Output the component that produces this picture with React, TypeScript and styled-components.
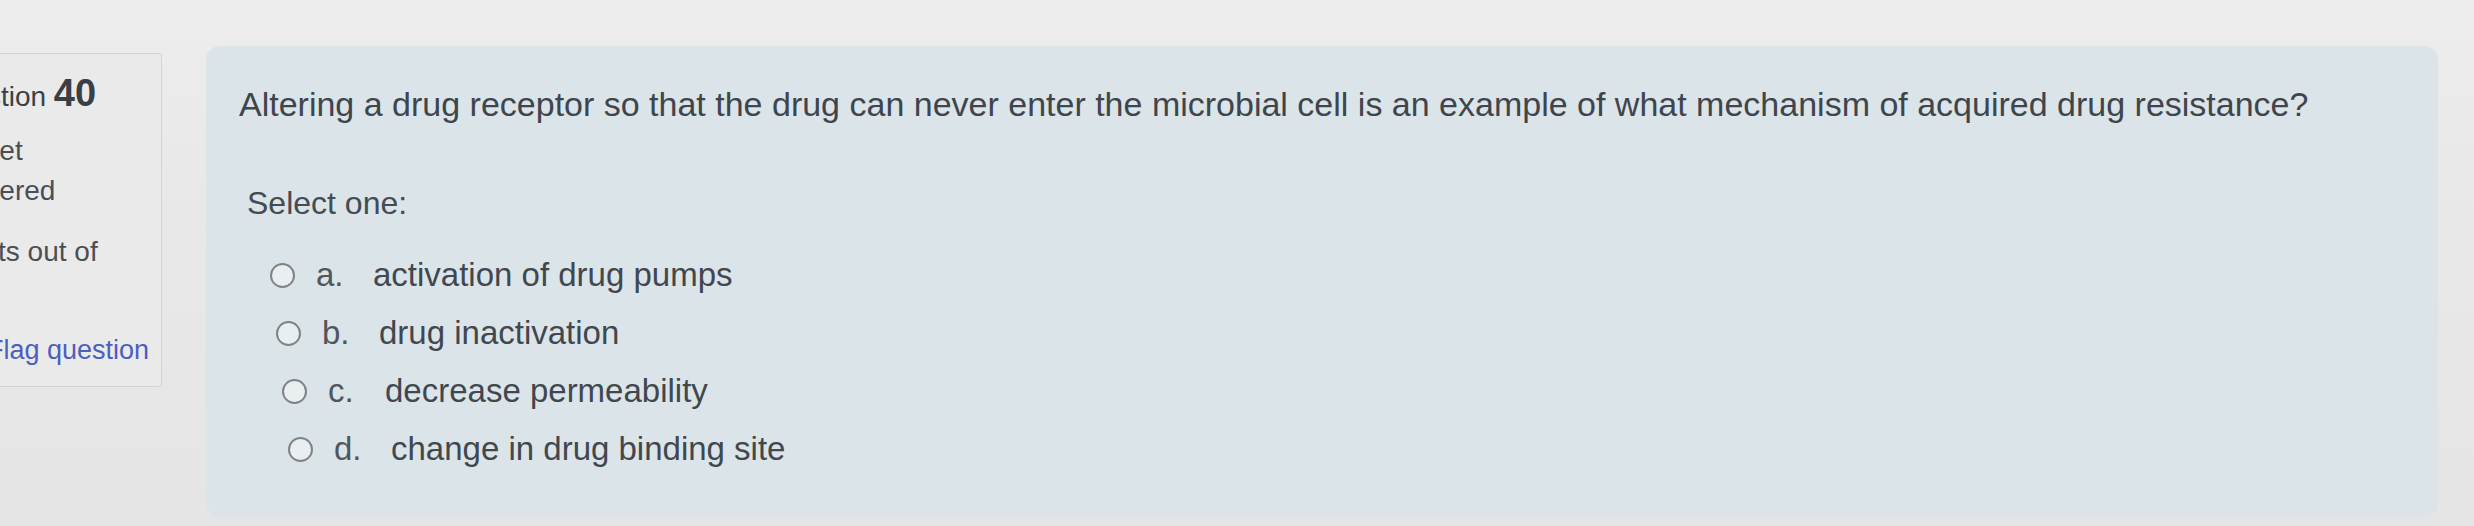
import React from 'react';
import styled, { createGlobalStyle } from 'styled-components';

const GlobalStyle = createGlobalStyle`
  html, body {
    margin: 0;
    padding: 0;
  }

  body {
    overflow: hidden;
    background: linear-gradient(180deg, #ededed 0%, #e9e8e8 40%, #e6e5e5 100%);
    font-family: 'Liberation Sans', Arial, sans-serif;
    color: #40464d;
  }
`;

type Option = {
  letter: string;
  text: string;
};

const OPTIONS: Option[] = [
  { letter: 'a.', text: 'activation of drug pumps' },
  { letter: 'b.', text: 'drug inactivation' },
  { letter: 'c.', text: 'decrease permeability' },
  { letter: 'd.', text: 'change in drug binding site' },
];

const FlagIcon = () => (
  <FlagMark width="22" height="24" viewBox="0 0 22 24" aria-hidden="true">
    <path d="M3 2v21" stroke="#4a5fc1" strokeWidth="2" />
    <path d="M4 3h14l-3 5 3 5H4z" fill="none" stroke="#4a5fc1" strokeWidth="2" />
  </FlagMark>
);

const App: React.FC = () => (
  <>
    <GlobalStyle />
    <Page>
      <InfoBox>
        <QuestionNumber>
          Question <QNo>40</QNo>
        </QuestionNumber>
        <InfoLine gap={11}>Not yet answered</InfoLine>
        <InfoLine gap={21} indent={8}>
          Points out of 1.00
        </InfoLine>
        <FlagLink>
          <FlagIcon />
          <span>Flag question</span>
        </FlagLink>
      </InfoBox>

      <QuestionPanel>
        <QuestionText>
          Altering a drug receptor so that the drug can never enter the microbial cell is an
          example of what mechanism of acquired drug resistance?
        </QuestionText>
        <Prompt>Select one:</Prompt>
        <Answers>
          {OPTIONS.map((option, index) => (
            <AnswerRow key={option.letter} indent={index * 6}>
              <Radio />
              <AnswerLetter>{option.letter}</AnswerLetter>
              <AnswerText>{option.text}</AnswerText>
            </AnswerRow>
          ))}
        </Answers>
      </QuestionPanel>
    </Page>
  </>
);

const Page = styled.div`
  display: flex;
  align-items: flex-start;
  height: 526px;
  padding-top: 46px;
  box-sizing: border-box;
`;

const InfoBox = styled.div`
  flex: none;
  width: 242px;
  height: 334px;
  margin-top: 7px;
  margin-left: -80px;
  padding: 16px 52px 19px 13px;
  box-sizing: border-box;
  background: #eaeaea;
  border: 1px solid #d3d3d3;
  border-radius: 3px;
  display: flex;
  flex-direction: column;
`;

const QuestionNumber = styled.div`
  font-size: 28px;
  line-height: 46px;
  white-space: nowrap;
  color: #3a3f45;
`;

const QNo = styled.span`
  font-size: 38px;
  font-weight: bold;
`;

const InfoLine = styled.div<{ gap?: number; indent?: number }>`
  margin-top: ${(p) => p.gap ?? 18}px;
  padding-left: ${(p) => p.indent ?? 0}px;
  font-size: 28px;
  line-height: 40px;
  color: #4a4f55;
`;

const FlagLink = styled.div`
  margin-top: 18px;
  display: flex;
  align-items: center;
  gap: 31px;
  font-size: 27px;
  line-height: 40px;
  white-space: nowrap;
  color: #4a5fc1;
`;

const FlagMark = styled.svg`
  flex: none;
`;

const QuestionPanel = styled.div`
  flex: none;
  width: 2232px;
  height: 471px;
  margin-left: 44px;
  padding: 38px 0 0 33px;
  box-sizing: border-box;
  background: #dbe4e8;
  border-radius: 14px;
  display: flex;
  flex-direction: column;
  align-items: flex-start;
`;

const QuestionText = styled.div`
  font-size: 34px;
  line-height: 40px;
  white-space: nowrap;
  color: #3f454c;
`;

const Prompt = styled.div`
  margin-top: 60px;
  margin-left: 8px;
  font-size: 32px;
  line-height: 38px;
  color: #454b52;
`;

const Answers = styled.div`
  margin-top: 24px;
  display: flex;
  flex-direction: column;
`;

const AnswerRow = styled.div<{ indent: number }>`
  display: flex;
  align-items: center;
  height: 58px;
  padding-left: ${(p) => 31 + p.indent}px;
`;

const Radio = styled.span`
  flex: none;
  width: 25px;
  height: 25px;
  box-sizing: border-box;
  border: 2px solid #7f8387;
  border-radius: 50%;
  background: #e9eff1;
  margin-right: 21px;
`;

const AnswerLetter = styled.span`
  width: 57px;
  font-size: 33px;
  color: #50565c;
`;

const AnswerText = styled.span`
  font-size: 33px;
  white-space: nowrap;
  color: #41474e;
`;

export default App;
